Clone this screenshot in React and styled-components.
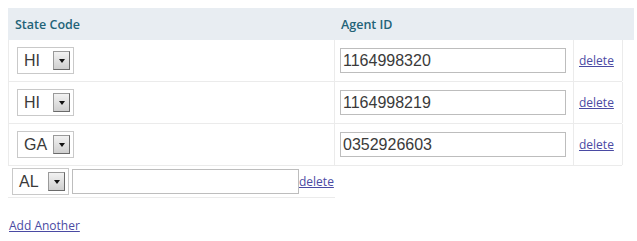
import React from "react";
import styled, { createGlobalStyle } from "styled-components";

const GlobalStyle = createGlobalStyle`
  html, body {
    margin: 0;
    padding: 0;
    background: #ffffff;
  }
  body {
    font-family: "Open Sans", "DejaVu Sans", sans-serif;
  }
`;

const rows = [
  { state: "HI", agent: "1164998320" },
  { state: "HI", agent: "1164998219" },
  { state: "GA", agent: "0352926603" },
];

export default function App() {
  return (
    <>
      <GlobalStyle />
      <Page>
        <HeaderRow>
          <HeaderCell>State Code</HeaderCell>
          <HeaderCell>Agent ID</HeaderCell>
        </HeaderRow>
        {rows.map((r, i) => (
          <Row key={i}>
            <StateCell>
              <StateSelect value={r.state} />
            </StateCell>
            <AgentCell>
              <TextInput defaultValue={r.agent} $width={226} />
            </AgentCell>
            <DeleteCell>
              <DeleteLink href="#">delete</DeleteLink>
            </DeleteCell>
          </Row>
        ))}
        <NewRow>
          <StateSelect value="AL" />
          <TextInput defaultValue="" $width={227} />
          <DeleteLink href="#">delete</DeleteLink>
        </NewRow>
        <AddLink href="#">Add Another</AddLink>
      </Page>
    </>
  );
}

function StateSelect({ value }) {
  return (
    <SelectBox>
      <SelectValue>{value}</SelectValue>
      <DropButton>
        <Arrow />
      </DropButton>
    </SelectBox>
  );
}

const Page = styled.div`
  padding: 8px 0 0 8px;
  width: 626px;
`;

const HeaderRow = styled.div`
  display: grid;
  grid-template-columns: 326px 1fr;
  height: 32px;
  background: #e8edf2;
  align-items: center;
`;

const HeaderCell = styled.div`
  padding-left: 7px;
  font-size: 12.5px;
  font-weight: 600;
  color: #236378;
  line-height: 16px;
  padding-top: 1px;
`;

const Row = styled.div`
  display: grid;
  grid-template-columns: 326px 239px 49px;
  width: 614px;
  height: 42px;
  box-sizing: border-box;
  border-bottom: 1px solid #ebebeb;
  border-left: 1px solid #ebebeb;
`;

const Cell = styled.div`
  display: flex;
  align-items: center;
  border-right: 1px solid #ebebeb;
`;

const StateCell = styled(Cell)`
  padding-left: 8px;
`;

const AgentCell = styled(Cell)`
  padding-left: 5px;
`;

const DeleteCell = styled(Cell)`
  padding-left: 5px;
`;

const SelectBox = styled.div`
  display: flex;
  align-items: center;
  justify-content: space-between;
  box-sizing: border-box;
  width: 57px;
  height: 27px;
  border: 1px solid #c9c9c9;
  background: #fff;
  padding: 0 3px 0 6px;
  flex-shrink: 0;
`;

const SelectValue = styled.span`
  font-family: "Liberation Sans", Arial, sans-serif;
  font-size: 16px;
  color: #3a3a3a;
`;

const DropButton = styled.div`
  display: flex;
  align-items: center;
  justify-content: center;
  box-sizing: border-box;
  width: 17px;
  height: 19px;
  border: 1px solid #6a6a6a;
  border-top-color: #9a9a9a;
  border-left-color: #9a9a9a;
  background: linear-gradient(#f2f2f2, #cfcfcf);
`;

const Arrow = styled.span`
  width: 0;
  height: 0;
  border-left: 3px solid transparent;
  border-right: 3px solid transparent;
  border-top: 4px solid #111;
  margin-top: 1px;
`;

const TextInput = styled.input`
  box-sizing: border-box;
  width: ${(p) => p.$width}px;
  height: 25px;
  margin: 0;
  padding: 0 2px;
  border: 1px solid #bdbdbd;
  font-family: "Liberation Sans", Arial, sans-serif;
  font-size: 16px;
  color: #3a3a3a;
  background: #fff;
  outline: none;
`;

const DeleteLink = styled.a`
  font-size: 12px;
  color: #4a4aa3;
  text-decoration: underline;
`;

const NewRow = styled.div`
  display: flex;
  align-items: center;
  gap: 3px;
  box-sizing: border-box;
  width: 327px;
  height: 32px;
  padding-left: 4px;
  border-bottom: 1px solid #ebebeb;
  & > a {
    margin-left: -3px;
  }
`;

const AddLink = styled.a`
  display: inline-block;
  margin-top: 19px;
  margin-left: 1px;
  font-size: 12px;
  color: #4a4aa3;
  text-decoration: underline;
`;
